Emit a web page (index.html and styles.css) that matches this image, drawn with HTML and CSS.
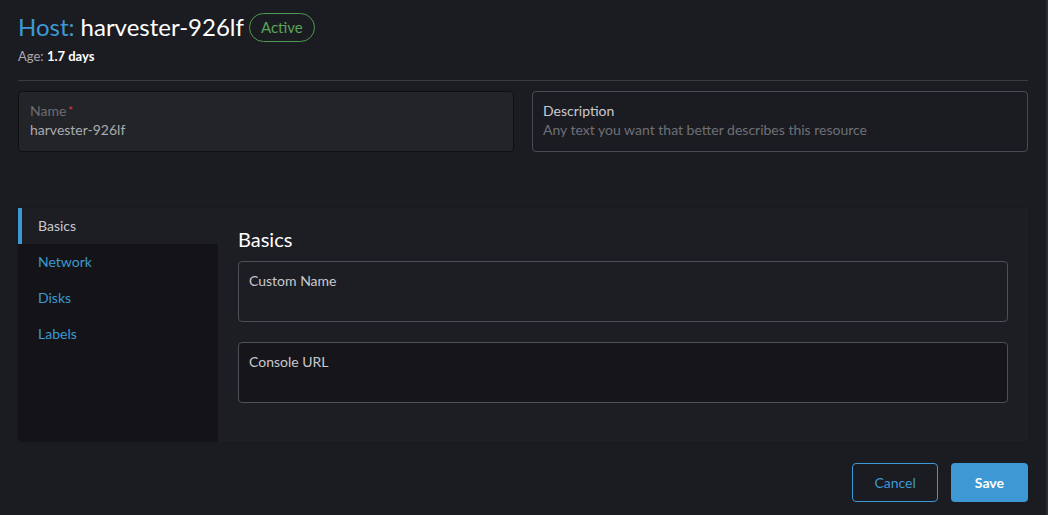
FILE: index.html
```html
<!DOCTYPE html>
<html lang="en">
<head>
    <meta charset="UTF-8" />
    <meta name="viewport" content="width=device-width, initial-scale=1" />
    <title>Host: harvester-926lf</title>
    <link rel="stylesheet" href="styles.css">
</head>
<body>
    <div class="page">
        <header class="masthead">
            <h1 class="title">
                <span class="title-type">Host:</span>
                <span class="title-name">harvester-926lf</span>
                <span class="badge">Active</span>
            </h1>
            <div class="age">Age: <span>1.7 days</span></div>
        </header>

        <div class="name-row">
            <div class="field field-name">
                <label>Name<span class="required">*</span></label>
                <div class="value">harvester-926lf</div>
            </div>
            <div class="field field-desc">
                <label>Description</label>
                <div class="placeholder">Any text you want that better describes this resource</div>
            </div>
        </div>

        <div class="tabbed">
            <ul class="tabs">
                <li class="active">Basics</li>
                <li>Network</li>
                <li>Disks</li>
                <li>Labels</li>
            </ul>
            <div class="tab-body">
                <h2>Basics</h2>
                <div class="input">
                    <label>Custom Name</label>
                </div>
                <div class="input input-dark">
                    <label>Console URL</label>
                </div>
            </div>
        </div>

        <footer class="actions">
            <button class="btn btn-outline">Cancel</button>
            <button class="btn btn-primary">Save</button>
        </footer>
    </div>
</body>
</html>
```

FILE: styles.css
```css
body {
    margin: 0;
    background-color: #1b1c21;
    color: #e4e4e7;
    font-family: Lato, "Noto Sans", sans-serif;
    font-size: 14px;
    overflow: hidden;
}
.page {
    padding: 0 18px 0 18px;
    height: 515px;
    box-sizing: border-box;
    border-right: 2px solid #2c2d33;
}
.masthead {
    padding-top: 11px;
    padding-bottom: 16px;
    border-bottom: 1px solid #3a3b41;
}
.title {
    margin: 0;
    font-size: 24px;
    font-weight: 400;
    line-height: 32px;
    display: flex;
    align-items: center;
}
.title-type {
    color: #3d98d3;
    margin-right: 6px;
}
.title-name {
    color: #ffffff;
}
.badge {
    margin-left: 5px;
    font-size: 15px;
    line-height: 27px;
    padding: 0 11px;
    color: #5aa45a;
    border: 1px solid #4e9a4e;
    border-radius: 15px;
}
.age {
    margin-top: 5px;
    font-size: 13px;
    color: #a9a9b0;
}
.age span {
    color: #ffffff;
    font-weight: 700;
}
.name-row {
    display: grid;
    grid-template-columns: 1fr 1fr;
    gap: 18px;
    margin-top: 10px;
}
.field {
    height: 61px;
    box-sizing: border-box;
    border-radius: 4px;
    padding: 10px 11px;
}
.field label {
    display: block;
    line-height: 18px;
}
.field-name {
    background-color: #232428;
    border: 1px solid #0f0f12;
}
.field-name label {
    color: #6c6d75;
}
.required {
    color: #e5343d;
    margin-left: 2px;
    vertical-align: top;
    font-size: 11px;
}
.field-name .value {
    color: #a9aab0;
    line-height: 20px;
}
.field-desc {
    border: 1px solid #4a4b52;
    padding-left: 10px;
}
.field-desc label {
    color: #c9c9cf;
}
.placeholder {
    color: #6f7077;
    line-height: 20px;
}
.tabbed {
    display: flex;
    margin-top: 56px;
    height: 234px;
    border-radius: 4px;
    box-shadow: 0 0 3px #16171b;
}
.tabs {
    list-style: none;
    margin: 0;
    padding: 0;
    width: 200px;
    background-color: #141418;
    border-bottom-left-radius: 4px;
}
.tabs li {
    height: 36px;
    line-height: 36px;
    padding-left: 20px;
    color: #3d98d3;
}
.tabs li.active {
    color: #c9c9cf;
    background-color: #1d1e23;
    border-left: 4px solid #3d98d3;
    padding-left: 16px;
}
.tab-body {
    flex: 1;
    background-color: #1d1e23;
    padding: 17px 20px 0 20px;
}
.tab-body h2 {
    margin: 0 0 8px;
    font-size: 20px;
    font-weight: 400;
    line-height: 28px;
    color: #ffffff;
}
.input {
    height: 61px;
    box-sizing: border-box;
    border: 1px solid #4f5057;
    border-radius: 4px;
    padding: 10px 10px;
    margin-bottom: 20px;
}
.input label {
    color: #c9c9cf;
    line-height: 18px;
}
.input-dark {
    background-color: #16161a;
}
.actions {
    display: flex;
    justify-content: flex-end;
    gap: 13px;
    margin-top: 21px;
}
.btn {
    height: 39px;
    border-radius: 4px;
    font-family: Lato, "Noto Sans", sans-serif;
    font-size: 14px;
    padding: 0 21px;
    cursor: pointer;
}
.btn-outline {
    background-color: transparent;
    border: 1px solid #3d98d3;
    color: #3d98d3;
}
.btn-primary {
    background-color: #3d98d3;
    border: none;
    color: #ffffff;
    font-weight: 700;
    padding: 0 24px;
}
```
